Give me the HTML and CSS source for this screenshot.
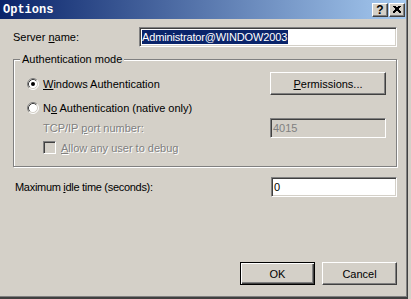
FILE: index.html
```html
<!DOCTYPE html>
<html>
<head>
<meta charset="utf-8">
<link rel="stylesheet" href="styles.css">
</head>
<body>
<div class="frame">
  <div class="window">
    <div class="titlebar">
      <span class="title">Options</span>
      <div class="caption-buttons">
        <span class="cbtn help">?</span>
        <span class="cbtn close"><svg width="8" height="7" viewBox="0 0 8 7"><path d="M0.5 0 L7.5 7 M1.5 0 L8.5 7 M7.5 0 L0.5 7 M6.5 0 L-0.5 7" stroke="#000" stroke-width="1" fill="none" shape-rendering="crispEdges"/></svg></span>
      </div>
    </div>
    <div class="content">
      <div class="server-row">
        <span class="label">Server <u>n</u>ame:</span>
        <div class="textbox server-box"><span class="sel">Administrator@WINDOW2003</span></div>
      </div>

      <div class="group">
        <span class="legend">Authentication mode</span>
        <div class="grow row-win">
          <div class="opt">
            <svg class="radio" width="12" height="12" viewBox="0 0 12 12">
              <circle cx="6" cy="6" r="5" fill="#fff"/>
              <path d="M2.11 9.89 A5.5 5.5 0 0 1 9.89 2.11" stroke="#808080" fill="none"/>
              <path d="M9.89 2.11 A5.5 5.5 0 0 1 2.11 9.89" stroke="#fff" fill="none"/>
              <path d="M2.82 9.18 A4.5 4.5 0 0 1 9.18 2.82" stroke="#404040" fill="none"/>
              <path d="M9.18 2.82 A4.5 4.5 0 0 1 2.82 9.18" stroke="#d4d0c8" fill="none"/>
              <circle cx="6" cy="6" r="2" fill="#000"/>
            </svg>
            <span><u>W</u>indows Authentication</span>
          </div>
          <button class="btn perm"><u>P</u>ermissions...</button>
        </div>
        <div class="grow row-no">
          <div class="opt">
            <svg class="radio" width="12" height="12" viewBox="0 0 12 12">
              <circle cx="6" cy="6" r="5" fill="#fff"/>
              <path d="M2.11 9.89 A5.5 5.5 0 0 1 9.89 2.11" stroke="#808080" fill="none"/>
              <path d="M9.89 2.11 A5.5 5.5 0 0 1 2.11 9.89" stroke="#fff" fill="none"/>
              <path d="M2.82 9.18 A4.5 4.5 0 0 1 9.18 2.82" stroke="#404040" fill="none"/>
              <path d="M9.18 2.82 A4.5 4.5 0 0 1 2.82 9.18" stroke="#d4d0c8" fill="none"/>
            </svg>
            <span>N<u>o</u> Authentication (native only)</span>
          </div>
        </div>
        <div class="grow row-port">
          <span class="disabled port-label">TCP/IP <u>p</u>ort number:</span>
          <div class="textbox port-box"><span class="dis-val">4015</span></div>
        </div>
        <div class="grow row-check">
          <span class="checkbox"></span>
          <span class="disabled check-label"><u>A</u>llow any user to debug</span>
        </div>
      </div>

      <div class="idle-row">
        <span class="label idle-label">Maximum <u>i</u>dle time (seconds):</span>
        <div class="textbox idle-box"><span>0</span></div>
      </div>

      <div class="actions">
        <button class="btn default">OK</button>
        <button class="btn">Cancel</button>
      </div>
    </div>
  </div>
</div>
</body>
</html>
```

FILE: styles.css
```css
* { box-sizing: border-box; }

body {
  margin: 0;
  background: #d4d0c8;
  font-family: "Liberation Sans", Tahoma, Arial, sans-serif;
  font-size: 11px;
  color: #000;
}

.frame {
  width: 408px;
  height: 299px;
  border-right: 1px solid #404040;
  border-bottom: 2px solid #404040;
}

.window {
  width: 407px;
  height: 297px;
  border-right: 1px solid #808080;
  border-bottom: 1px solid #808080;
  display: flex;
  flex-direction: column;
}

.titlebar {
  height: 19px;
  flex: none;
  display: flex;
  align-items: center;
  padding: 0 1px 0 3px;
  background: linear-gradient(to right, #0a246a, #a6caf0);
}

.title {
  color: #fff;
  font-family: "Liberation Mono", "DejaVu Sans Mono", monospace;
  font-weight: bold;
  font-size: 12px;
  line-height: 14px;
}

.caption-buttons {
  margin-left: auto;
  display: flex;
  gap: 1px;
}

.cbtn {
  width: 16px;
  height: 14px;
  display: flex;
  align-items: center;
  justify-content: center;
  background: #d4d0c8;
  border: 1px solid;
  border-color: #fff #404040 #404040 #fff;
  box-shadow: inset -1px -1px 0 #808080;
  font-weight: bold;
  font-size: 12px;
  line-height: 10px;
  color: #000;
}

.cbtn svg { display: block; }

.content {
  flex: 1;
  display: flex;
  flex-direction: column;
  padding: 8px 9px 11px 13px;
}

.server-row {
  height: 20px;
  display: flex;
  align-items: center;
  justify-content: space-between;
}

.textbox {
  height: 20px;
  display: flex;
  align-items: center;
  background: #fff;
  border: 1px solid;
  border-color: #808080 #fff #fff #808080;
  box-shadow: inset 1px 1px 0 #404040, inset -1px -1px 0 #d4d0c8;
  padding: 0 2px;
  line-height: 14px;
}

.server-box {
  width: 258px;
  padding-left: 2px;
}

.sel {
  background: #0a246a;
  color: #fff;
  padding: 0 1px 0 0;
  line-height: 14px;
  letter-spacing: -0.15px;
}

.group {
  margin-top: 12px;
  display: flex;
  flex-direction: column;
  border: 1px solid #808080;
  box-shadow: 1px 1px 0 #fff, inset 1px 1px 0 #fff;
  padding: 0 10px 12px 13px;
}

.legend {
  align-self: flex-start;
  margin: -7px 0 0 -7px;
  padding: 0 2px;
  background: #d4d0c8;
  line-height: 13px;
  height: 13px;
}

.grow {
  display: flex;
  align-items: center;
}

.row-win {
  height: 23px;
  margin-top: 6px;
  justify-content: space-between;
}

.row-no {
  height: 14px;
  margin-top: 6px;
}

.row-port {
  height: 20px;
  margin-top: 3px;
  justify-content: space-between;
}

.row-check {
  height: 13px;
  margin-top: 3px;
}

.opt {
  display: flex;
  align-items: center;
  gap: 4px;
}

.radio { display: block; flex: none; }

.btn {
  height: 23px;
  width: 75px;
  padding: 0;
  font-family: inherit;
  font-size: 11px;
  color: #000;
  background: #d4d0c8;
  border: 1px solid;
  border-color: #fff #404040 #404040 #fff;
  box-shadow: inset -1px -1px 0 #808080;
  border-radius: 0;
}

.btn.perm {
  width: 116px;
}

.btn.default {
  border-color: #000;
  box-shadow: inset 1px 1px 0 #fff, inset -1px -1px 0 #404040, inset -2px -2px 0 #808080;
}

.disabled {
  color: #808080;
  text-shadow: 1px 1px 0 #fff;
}

.port-label { padding-left: 16px; }

.port-box {
  width: 116px;
  background: #d4d0c8;
}

.dis-val { color: #808080; }

.checkbox {
  width: 13px;
  height: 13px;
  margin-left: 16px;
  flex: none;
  background: #d4d0c8;
  border: 1px solid;
  border-color: #808080 #fff #fff #808080;
  box-shadow: inset 1px 1px 0 #404040, inset -1px -1px 0 #d4d0c8;
}

.check-label { margin-left: 5px; }

.idle-row {
  margin-top: 10px;
  height: 20px;
  display: flex;
  align-items: center;
  justify-content: space-between;
}

.idle-label {
  margin-left: 2px;
  letter-spacing: -0.3px;
}

.idle-box { width: 126px; }

.actions {
  margin-top: auto;
  display: flex;
  justify-content: flex-end;
  gap: 7px;
}
```
